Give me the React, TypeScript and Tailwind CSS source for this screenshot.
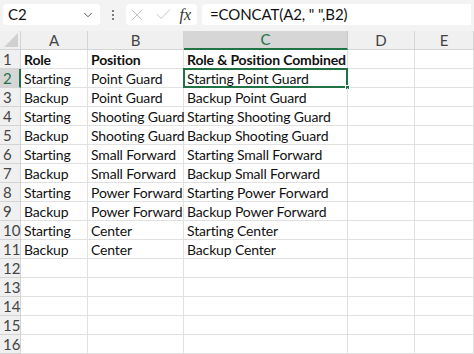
import { ChevronDown, X, Check } from "lucide-react";

const rows: [string, string, string][] = [
  ["Role", "Position", "Role & Position Combined"],
  ["Starting", "Point Guard", "Starting Point Guard"],
  ["Backup", "Point Guard", "Backup Point Guard"],
  ["Starting", "Shooting Guard", "Starting Shooting Guard"],
  ["Backup", "Shooting Guard", "Backup Shooting Guard"],
  ["Starting", "Small Forward", "Starting Small Forward"],
  ["Backup", "Small Forward", "Backup Small Forward"],
  ["Starting", "Power Forward", "Starting Power Forward"],
  ["Backup", "Power Forward", "Backup Power Forward"],
  ["Starting", "Center", "Starting Center"],
  ["Backup", "Center", "Backup Center"],
  ["", "", ""],
  ["", "", ""],
  ["", "", ""],
  ["", "", ""],
  ["", "", ""],
];

const cols = ["A", "B", "C", "D", "E"];

export default function App() {
  return (
    <div className="w-[474px] h-[354px] overflow-hidden bg-white font-['Lato',sans-serif] text-[#111]">
      {/* formula bar */}
      <div className="h-[31px] bg-[#f3f3f3] flex items-center gap-[5px] px-[3px] pb-[2px]">
        <div className="w-[97px] h-[21px] bg-white rounded-[4px] flex items-center justify-between pl-[5px] pr-[5px] text-[15px]">
          <span>C2</span>
          <ChevronDown size={14} strokeWidth={1.5} className="text-[#444]" />
        </div>
        <div className="w-[16px] flex flex-col items-center gap-[2px]">
          <span className="w-[2px] h-[2px] bg-[#555] rounded-full" />
          <span className="w-[2px] h-[2px] bg-[#555] rounded-full" />
          <span className="w-[2px] h-[2px] bg-[#555] rounded-full" />
        </div>
        <div className="w-[71px] h-[21px] bg-white rounded-[4px] flex items-center justify-between pl-[1px] pr-[4px]">
          <X size={20} strokeWidth={1} className="text-[#b5b5b5]" />
          <Check size={19} strokeWidth={1} className="text-[#b5b5b5]" />
          <span className="font-['Liberation_Serif',serif] italic text-[16px] text-[#333] pr-[2px]">fx</span>
        </div>
        <div className="flex-1 h-[21px] bg-white rounded-l-[4px] flex items-center pl-[8px] text-[15px] tracking-[-0.1px]">
          =CONCAT(A2, " ",B2)
        </div>
      </div>

      {/* sheet */}
      <div className="grid grid-cols-[21px_67px_96px_164px_67px_59px] auto-rows-[19px]">
        <div className="bg-[#f0f0f0] border-r border-b border-[#d4d4d4] relative overflow-hidden">
          <div className="absolute right-[2px] bottom-[2px] w-0 h-0 border-l-[14px] border-l-transparent border-b-[14px] border-b-[#d0d0d0]" />
        </div>
        {cols.map((c) => (
          <div
            key={c}
            className={
              c === "C"
                ? "bg-[#d6d6d6] border-b-2 border-[#217346] border-r border-r-[#c8c8c8] flex items-center justify-center text-[15px] text-[#217346]"
                : "bg-[#f0f0f0] border-r border-b border-[#d4d4d4] flex items-center justify-center text-[15px] text-[#444]"
            }
          >
            {c}
          </div>
        ))}
        {rows.map((r, i) => (
          <Row key={i} n={i + 1} r={r} />
        ))}
      </div>
    </div>
  );
}

function Row({ n, r }: { n: number; r: [string, string, string] }) {
  const sel = n === 2;
  const cell = "border-r border-b border-[#e1e1e1] flex items-center pl-[3px] pt-px whitespace-nowrap overflow-visible text-[14px] tracking-[-0.15px] leading-none";
  return (
    <>
      <div
        className={
          sel
            ? "bg-[#d6d6d6] border-r-2 border-[#217346] border-b border-b-[#d4d4d4] flex items-center pl-[3px] text-[15px] text-[#217346]"
            : "bg-[#f0f0f0] border-r border-b border-[#d4d4d4] flex items-center pl-[3px] text-[15px] text-[#444]"
        }
      >
        {n}
      </div>
      <div className={cell + (n === 1 ? " font-bold" : "")}>{r[0]}</div>
      <div className={cell + (n === 1 ? " font-bold" : "")}>{r[1]}</div>
      <div className={cell + " relative" + (n === 1 ? " font-bold" : "")}>
        {r[2]}
        {sel && (
          <div className="absolute -left-px -top-px -right-px -bottom-px border-2 border-[#217346]">
            <div className="absolute -right-[4px] -bottom-[4px] w-[5px] h-[5px] bg-[#217346] border border-white" />
          </div>
        )}
      </div>
      <div className={cell} />
      <div className={cell} />
    </>
  );
}
